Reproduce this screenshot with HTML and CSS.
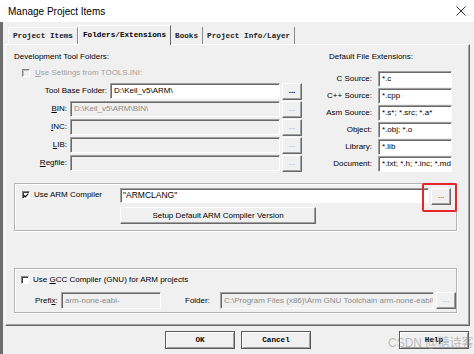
FILE: index.html
```html
<!DOCTYPE html>
<html>
<head>
<meta charset="utf-8">
<title>Manage Project Items</title>
<link rel="stylesheet" href="styles.css">
</head>
<body>
<div class="window">
  <div class="titlebar">
    <span class="title">Manage Project Items</span>
    <svg class="close" width="10" height="10" viewBox="0 0 10 10"><path d="M0.5 0.5L9.5 9.5M9.5 0.5L0.5 9.5" stroke="#333" stroke-width="1" fill="none"/></svg>
  </div>
  <div class="main">
    <div class="tabs">
      <div class="tab">Project Items</div>
      <div class="tab active">Folders/Extensions</div>
      <div class="tab">Books</div>
      <div class="tab">Project Info/Layer</div>
    </div>
    <div class="panel">
      <div class="top">
        <div class="leftcol">
          <div class="heading">Development Tool Folders:</div>
          <div class="chkrow disabled"><span class="chk"></span><span class="chklabel"><u>U</u>se Settings from TOOLS.INI:</span></div>
          <div class="rows">
            <div class="row"><span class="lbl wide">Tool Base Folder:</span><div class="input">D:\Keil_v5\ARM\</div><div class="btn dots">...</div></div>
            <div class="row"><span class="lbl"><u>B</u>IN:</span><div class="input off">D:\Keil_v5\ARM\BIN\</div><div class="btn dots off">...</div></div>
            <div class="row"><span class="lbl"><u>I</u>NC:</span><div class="input off"></div><div class="btn dots off">...</div></div>
            <div class="row"><span class="lbl"><u>L</u>IB:</span><div class="input off"></div><div class="btn dots off">...</div></div>
            <div class="row"><span class="lbl"><u>R</u>egfile:</span><div class="input off"></div><div class="btn dots off">...</div></div>
          </div>
        </div>
        <div class="rightcol">
          <div class="heading rhead">Default File Extensions:</div>
          <div class="extrows">
            <div class="extrow"><span class="elbl">C Source:</span><div class="input ext">*.c</div></div>
            <div class="extrow"><span class="elbl">C++ Source:</span><div class="input ext">*.cpp</div></div>
            <div class="extrow"><span class="elbl">Asm Source:</span><div class="input ext">*.s*; *.src; *.a*</div></div>
            <div class="extrow"><span class="elbl">Object:</span><div class="input ext">*.obj; *.o</div></div>
            <div class="extrow"><span class="elbl">Library:</span><div class="input ext">*.lib</div></div>
            <div class="extrow"><span class="elbl">Document:</span><div class="input ext">*.txt; *.h; *.inc; *.md</div></div>
          </div>
        </div>
      </div>

      <div class="group arm">
        <div class="armleft">
          <span class="chk checked"><svg width="7" height="7" viewBox="0 0 7 7"><path d="M0.8 3.2L2.6 5.2L6.2 1.2" stroke="#000" stroke-width="1.4" fill="none"/></svg></span>
          <span class="chklabel">Use ARM Compiler</span>
        </div>
        <div class="armright">
          <div class="armrow"><div class="input armin">"ARMCLANG"</div><div class="btn dots small off2">...</div></div>
          <div class="btn setup">Setup Default ARM Compiler Version</div>
        </div>
      </div>

      <div class="group gcc">
        <div class="gccrow1"><span class="chk"></span><span class="chklabel">Use <u>G</u>CC Compiler (GNU) for ARM projects</span></div>
        <div class="gccrow2">
          <span class="glbl">Prefi<u>x</u>:</span>
          <div class="input off prefix">arm-none-eabi-</div>
          <span class="glbl folder">Folder:</span>
          <div class="input off folderin">C:\Program Files (x86)\Arm GNU Toolchain arm-none-eabi\</div>
          <div class="btn dots off">...</div>
        </div>
      </div>
    </div>
    <div class="footer">
      <div class="fbtn">OK</div>
      <div class="fbtn">Cancel</div>
      <div class="fbtn help">Help</div>
    </div>
  </div>
  <div class="annot"></div>
  <div class="watermark">CSDN @糖诗客</div>
</div>
</body>
</html>
```

FILE: styles.css
```css
* { box-sizing: border-box; }
html, body { margin: 0; padding: 0; }
body {
  width: 474px;
  height: 354px;
  overflow: hidden;
  background: #f0f0f0;
  font-family: "Liberation Sans", Arial, sans-serif;
  font-size: 8px;
  color: #000;
}
.window { position: relative; width: 474px; height: 354px; display: flex; flex-direction: column; }
.titlebar {
  height: 22px;
  background: #ffffff;
  display: flex;
  align-items: center;
  justify-content: space-between;
  padding: 0 8px 0 8px;
}
.title { font-size: 10px; color: #000; }
.close { margin-right: 0; }

.main {
  flex: 1;
  display: flex;
  flex-direction: column;
  border-left: 3px solid #6d6d6d;
}
.tabs {
  height: 22px;
  display: flex;
  align-items: flex-end;
  padding-left: 5px;
  position: relative;
  z-index: 2;
}
.tab {
  height: 17px;
  padding: 0 4px;
  display: flex;
  align-items: center;
  font-family: "Liberation Mono", "Courier New", monospace;
  font-weight: bold;
  font-size: 7.7px;
  color: #222;
  border-right: 1px solid #8a8a8a;
  margin-bottom: 0;
}
.tab:first-child { border-left: 1px solid #fff; border-top: 1px solid #fff; }
.tab.active {
  height: 20px;
  margin-bottom: -1px;
  padding: 0 4px 1px 4px;
  background: #f0f0f0;
  border-top: 1px solid #fff;
  border-left: 1px solid #fff;
  border-right: 1px solid #696969;
  color: #000;
}
.panel {
  margin-left: 2px;
  width: 465px;
  height: 282px;
  border-top: 1px solid #fff;
  border-left: 1px solid #fff;
  border-right: 1px solid #696969;
  border-bottom: 1px solid #696969;
  box-shadow: inset -1px -1px 0 #a0a0a0;
  display: flex;
  flex-direction: column;
}
.top { display: flex; padding: 6px 0 0 8px; }
.leftcol { width: 288px; display: flex; flex-direction: column; }
.heading { height: 12px; line-height: 12px; }
.chkrow { height: 12px; margin-top: 4px; display: flex; align-items: center; padding-left: 8px; }
.chkrow.disabled { color: #a0a0a0; }
.chk {
  width: 8px; height: 8px;
  background: #fff;
  border-top: 1px solid #808080;
  border-left: 1px solid #808080;
  border-bottom: 1px solid #fff;
  border-right: 1px solid #fff;
  box-shadow: inset 1px 1px 0 #404040;
  display: inline-flex;
  align-items: center;
  justify-content: center;
  flex: none;
}
.disabled .chk { background: #f0f0f0; box-shadow: inset 1px 1px 0 #c0c0c0; }
.chklabel { margin-left: 5px; line-height: 12px; white-space: nowrap; }
.rows { margin-top: 4px; display: flex; flex-direction: column; gap: 1px; }
.row { height: 17px; display: flex; align-items: flex-start; }
.lbl { width: 54px; text-align: right; line-height: 16px; padding-right: 1px; flex: none; }
.lbl.wide { width: 94px; }
.input {
  height: 16px;
  flex: 1;
  margin-left: 2px;
  background: #fff;
  border-top: 1px solid #a0a0a0;
  border-left: 1px solid #a0a0a0;
  border-bottom: 1px solid #fff;
  border-right: 1px solid #fff;
  box-shadow: inset 1px 1px 0 #696969;
  padding: 0 2px 0 3px;
  line-height: 14px;
  white-space: nowrap;
  overflow: hidden;
}
.input.off { background: #f0f0f0; color: #8c8c8c; }
.btn {
  background: #f0f0f0;
  border-top: 1px solid #fff;
  border-left: 1px solid #fff;
  border-right: 1px solid #696969;
  border-bottom: 1px solid #696969;
  box-shadow: inset -1px -1px 0 #a0a0a0;
  display: flex;
  align-items: center;
  justify-content: center;
  flex: none;
}
.dots { width: 20px; height: 17px; margin-left: 2px; font-weight: bold; font-size: 8px; padding-bottom: 2px; }
.dots.off { color: #a0a0a0; font-weight: normal; }
.dots.off2 { font-weight: normal; color: #333; }

.rightcol { margin-left: 8px; display: flex; flex-direction: column; }
.rhead { padding-left: 19px; }
.extrows { margin-top: 8px; display: flex; flex-direction: column; gap: 1px; }
.extrow { height: 16px; display: flex; }
.elbl { width: 62px; text-align: right; line-height: 16px; flex: none; }
.input.ext { flex: none; width: 74px; margin-left: 6px; }

.group {
  margin-left: 8px;
  width: 443px;
  border: 1px solid #b4b4b4;
  box-shadow: inset 1px 1px 0 #fff, 1px 1px 0 #fff;
}
.arm { margin-top: 11px; height: 48px; padding-top: 4px; display: flex; }
.armleft { width: 105px; padding: 2px 0 0 7px; display: flex; align-items: flex-start; }
.armleft .chk { margin-top: 1px; }
.armleft .chklabel { line-height: 10px; margin-left: 4px; }
.armright { display: flex; flex-direction: column; }
.armrow { display: flex; height: 17px; }
.input.armin { flex: none; width: 309px; height: 15px; margin-left: 0; font-size: 8.5px; line-height: 13px; padding-left: 2px; }
.setup { width: 196px; height: 17px; margin-top: 2px; }

.gcc { margin-top: 37px; height: 45px; padding-top: 5px; }
.gccrow1 { height: 12px; display: flex; align-items: center; padding-left: 6px; }
.gccrow1 .chklabel { margin-left: 4px; }
.gccrow2 { margin-top: 6px; height: 17px; display: flex; align-items: flex-start; padding-left: 20px; }
.glbl { line-height: 17px; flex: none; width: 24px; }
.glbl.folder { margin-left: 24px; width: 30px; }
.input.prefix { flex: none; width: 100px; height: 17px; }
.input.folderin { flex: none; width: 214px; height: 17px; margin-left: 5px; line-height: 15px; }
.input.prefix { line-height: 15px; }

.footer {
  flex: 1;
  display: flex;
  align-items: flex-start;
  padding: 5px 0 0 162px;
}
.fbtn {
  width: 70px;
  height: 18px;
  margin-right: 6px;
  background: #f0f0f0;
  border: 1px solid #5a5a5a;
  box-shadow: inset 1px 1px 0 #fff, inset -1px -1px 0 #a0a0a0;
  display: flex;
  align-items: center;
  justify-content: center;
  font-family: "Liberation Mono", "Courier New", monospace;
  font-weight: bold;
  font-size: 7.7px;
}
.fbtn.help { margin-left: auto; margin-right: 5px; }

.annot {
  position: absolute;
  left: 422px;
  top: 183px;
  width: 35px;
  height: 29px;
  border: 2px solid #e5262b;
  border-radius: 2px;
}
.watermark {
  position: absolute;
  left: 388px;
  top: 333px;
  font-family: "Liberation Sans", "Noto Sans CJK SC", sans-serif;
  font-size: 12px;
  color: rgba(140, 140, 140, 0.55);
  white-space: nowrap;
}
```
